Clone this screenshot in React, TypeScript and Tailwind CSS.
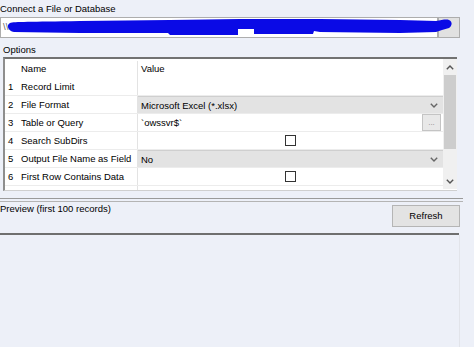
import React from "react";

type Row = { n: string; name: string; type: "text" | "select" | "button" | "check"; value?: string };

const rows: Row[] = [
  { n: "1", name: "Record Limit", type: "text", value: "" },
  { n: "2", name: "File Format", type: "select", value: "Microsoft Excel (*.xlsx)" },
  { n: "3", name: "Table or Query", type: "button", value: "`owssvr$`" },
  { n: "4", name: "Search SubDirs", type: "check" },
  { n: "5", name: "Output File Name as Field", type: "select", value: "No" },
  { n: "6", name: "First Row Contains Data", type: "check" },
];

function Chevron({ up = false, color = "#555" }: { up?: boolean; color?: string }) {
  return (
    <svg width="8" height="5" viewBox="0 0 8 5" className="block">
      <path d={up ? "M0.8 4.2 L4 1 L7.2 4.2" : "M0.8 0.8 L4 4 L7.2 0.8"} fill="none" stroke={color} strokeWidth="1.4" />
    </svg>
  );
}

function ValueCell({ row }: { row: Row }) {
  if (row.type === "select") {
    return (
      <div className="flex-1 flex items-center justify-between bg-[#e3e3e3] border-t border-[#cfcfcf] pl-[3px] pr-[5px] h-full">
        <span className="pt-[2px]">{row.value}</span>
        <Chevron color="#666" />
      </div>
    );
  }
  if (row.type === "button") {
    return (
      <div className="flex-1 flex items-center justify-between bg-white pl-[3px] pr-[2px] h-full">
        <span className="pt-[2px]">{row.value}</span>
        <div className="w-[19px] h-[17px] bg-[#e8e8e8] border border-[#c4c4c4] flex items-end justify-center pb-[3px] text-[#888] text-[8px] leading-none">
          ...
        </div>
      </div>
    );
  }
  if (row.type === "check") {
    return (
      <div className="flex-1 flex items-center justify-center bg-white h-full">
        <div className="w-[11px] h-[11px] border border-[#333] bg-white" />
      </div>
    );
  }
  return <div className="flex-1 bg-white h-full pl-[3px]">{row.value}</div>;
}

export default function App() {
  return (
    <div className="w-[474px] h-[347px] bg-[#edf0f8] font-['Liberation_Sans',Arial,sans-serif] text-[9.5px] text-black overflow-hidden flex flex-col">
      <div className="h-[17px] pt-[3px] leading-[12px] pl-[0px]">Connect a File or Database</div>

      <div className="relative flex h-[21px] pr-[14px]">
        <div className="flex-1 border border-[#adadad] bg-white flex items-center pl-[2px] text-[#666]">\\</div>
        <div className="w-[22px] border border-[#adadad] bg-[#e1e1e1]" />
        <svg className="absolute left-0 top-0" width="474" height="21" viewBox="0 17 474 21">
          <path
            d="M10 23 C14 21.5 30 22 80 21 L170 20 L240 19 L320 19 L400 20 L436 21 C442 20 446 19 449 20 C453 22 452 26 449 28 L442 30 L436 32 L400 33 L320 32 L314 31 L313 34 L254 34 L254 29 L238 29 L238 35 L170 35 L168 33 L80 33 L14 32 C8 31 6 25 10 23 Z"
            fill="#0a0ae6"
          />
        </svg>
      </div>

      <div className="h-[19px] pl-[3px] pt-[6px] leading-[12px]">Options</div>

      <div className="ml-[3px] w-[454px] h-[134px] border-t-2 border-l-2 border-b border-t-[#727272] border-l-[#8e8e8e] border-b-[#cfcfcf] flex bg-white">
        <div className="w-[438px] flex flex-col">
          <div className="flex h-[19px] items-center pt-[2px]">
            <div className="w-[13px]" />
            <div className="w-[120px] pl-[3px] border-r border-[#e3e3e3] h-full flex items-center">Name</div>
            <div className="flex-1 pl-[3px]">Value</div>
          </div>
          {rows.map((r) => (
            <div key={r.n} className="flex h-[18px] border-b border-[#ececec] items-center">
              <div className="w-[13px] pl-[3px] pt-[2px]">{r.n}</div>
              <div className="w-[120px] pl-[3px] pt-[2px] border-r border-[#e3e3e3] h-full flex items-center">{r.name}</div>
              <ValueCell row={r} />
            </div>
          ))}
          <div className="flex h-[4px]">
            <div className="w-[133px] border-r border-[#e3e3e3]" />
          </div>
        </div>
        <div className="w-[14px] bg-[#f0f0f0] flex flex-col items-center mb-[1px]">
          <div className="h-[16px] flex items-center justify-center pt-[1px]">
            <Chevron up color="#555" />
          </div>
          <div className="w-[12px] h-[74px] bg-[#cdcdcd]" />
          <div className="flex-1" />
          <div className="h-[16px] flex items-center justify-center">
            <Chevron color="#555" />
          </div>
        </div>
      </div>

      <div className="mt-[7px] w-[463px] border-t border-[#9a9a9a]" />
      <div className="mt-[2px] w-[463px] border-t border-[#b4b4b4]" />

      <div className="h-[31px] flex justify-between pr-[14px]">
        <div className="leading-[12px] pt-[1px]">Preview (first 100 records)</div>
        <div className="mt-[3px] w-[68px] h-[22px] bg-[#e3e3e3] border border-[#b5b5b5] flex items-center justify-center">
          Refresh
        </div>
      </div>

      <div className="w-[459px] border-t-2 border-[#6f6f6f]" />
      <div className="flex-1 w-[460px] border-r border-[#e2e4ea]" />
    </div>
  );
}
